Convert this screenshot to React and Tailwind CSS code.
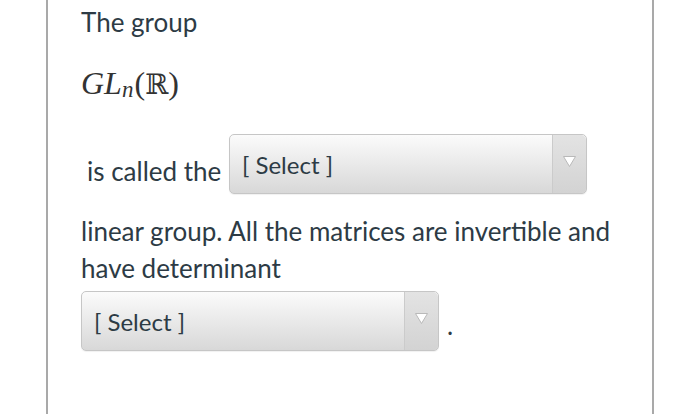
import React from "react";

function Caret() {
  return (
    <svg width="15" height="13" viewBox="0 0 15 13" className="block">
      <path d="M1.5 1.5 L13.5 1.5 L7.5 11.5 Z" fill="#ffffff" stroke="#b9b9b9" strokeWidth="1" strokeLinejoin="round" />
    </svg>
  );
}

function Select({ className = "" }) {
  return (
    <div
      className={
        "flex h-[60px] w-[358px] shrink-0 rounded-[5px] border border-[#c6c6c6] bg-gradient-to-b from-[#fbfbfb] to-[#d8d8d8] shadow-[0_1px_1px_rgba(0,0,0,0.06)] " +
        className
      }
    >
      <div className="flex flex-1 items-center pl-[12px] pt-[2px] text-[24px] text-[#2d3b45]">[ Select ]</div>
      <div className="flex w-[34px] items-center justify-center rounded-r-[5px] border-l border-[#cbcbcb] bg-gradient-to-b from-[#e3e3e3] to-[#d3d3d3] pb-[6px]">
        <Caret />
      </div>
    </div>
  );
}

export default function App() {
  return (
    <div className="h-[414px] w-[700px] overflow-hidden bg-white" style={{ fontFamily: "Lato, 'Liberation Sans', sans-serif" }}>
      <div className="ml-[46px] h-[414px] w-[608px] border-x-2 border-[#a9a9a9] pl-[33px] text-[#2d3b45]">
        <p className="h-[38px] pt-[3px] text-[26px] leading-[38px]">The group</p>
        <div
          className="mt-[26px] flex h-[38px] items-baseline text-[32px] leading-[38px] text-[#333]"
          style={{ fontFamily: "'Liberation Serif', 'DejaVu Serif', serif" }}
        >
          <span className="italic">GL</span>
          <span className="relative top-[3px] text-[23px] italic">n</span>
          <span className="ml-[1px]">(</span>
          <span className="text-[28px]" style={{ fontFamily: "'DejaVu Serif', serif" }}>ℝ</span>
          <span>)</span>
        </div>
        <div className="mt-[32px] flex h-[60px] items-start">
          <span className="ml-[6px] mt-[18px] w-[142px] shrink-0 whitespace-nowrap text-[26px] leading-[38px]">is called the</span>
          <Select />
        </div>
        <p className="mt-[19px] text-[26px] leading-[37px]">
          linear group. All the matrices are invertible and
          <br />
          have determinant
        </p>
        <div className="mt-[4px] flex items-start">
          <Select />
          <span className="ml-[8px] mt-[15px] text-[26px] leading-[38px]">.</span>
        </div>
      </div>
    </div>
  );
}
